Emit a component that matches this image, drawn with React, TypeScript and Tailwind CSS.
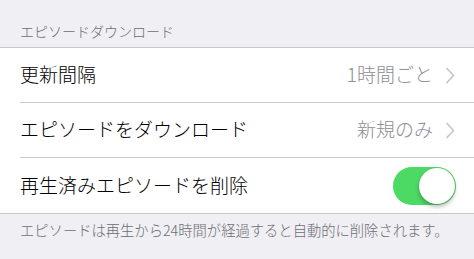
import React from "react";

const font = { fontFamily: '"Noto Sans CJK JP", "Noto Sans", sans-serif' };

function Chevron() {
  return (
    <svg width="10" height="17" viewBox="0 0 10 17" className="shrink-0">
      <path d="M2 1.5 L8.5 8.5 L2 15.5" fill="none" stroke="#c7c7cc" strokeWidth="1.8" strokeLinecap="round" strokeLinejoin="round" />
    </svg>
  );
}

function Toggle() {
  return (
    <div className="relative h-[38px] w-[63px] rounded-full bg-[#4cd964]">
      <div className="absolute right-[1px] top-[1px] h-[36px] w-[36px] rounded-full bg-white shadow-[0_3px_4px_rgba(0,0,0,0.25),0_0_1px_rgba(0,0,0,0.2)]" />
    </div>
  );
}

function Row({ label, value, last, children }: { label: string; value?: string; last?: boolean; children?: React.ReactNode }) {
  return (
    <div className="pl-5 bg-white">
      <div className={`flex h-[55px] items-center justify-between pr-[19px] ${last ? "" : "border-b border-[#c8c7cc]"}`}>
        <span className="pb-[3px] text-[19px] font-light leading-none text-black">{label}</span>
        {children ?? (
          <div className="flex items-center gap-[12px]">
            <span className="pb-[3px] text-[19px] font-light leading-none text-[#8e8e93]">{value}</span>
            <Chevron />
          </div>
        )}
      </div>
    </div>
  );
}

export default function App() {
  return (
    <div className="h-[259px] w-[474px] overflow-hidden bg-[#efeff4]" style={font}>
      <div className="h-[48px] border-b border-[#c8c7cc] pl-5 pt-[18px]">
        <span className="text-[14px] font-light leading-[18px] text-[#6d6d72]">エピソードダウンロード</span>
      </div>
      <Row label="更新間隔" value="1時間ごと" />
      <Row label="エピソードをダウンロード" value="新規のみ" />
      <Row label="再生済みエピソードを削除" last>
        <div className="-mr-[1px]">
          <Toggle />
        </div>
      </Row>
      <div className="border-t border-[#c8c7cc] pl-5 pt-[3px]">
        <span className="text-[14.3px] font-light leading-[18px] text-[#6d6d72]">エピソードは再生から24時間が経過すると自動的に削除されます。</span>
      </div>
    </div>
  );
}
